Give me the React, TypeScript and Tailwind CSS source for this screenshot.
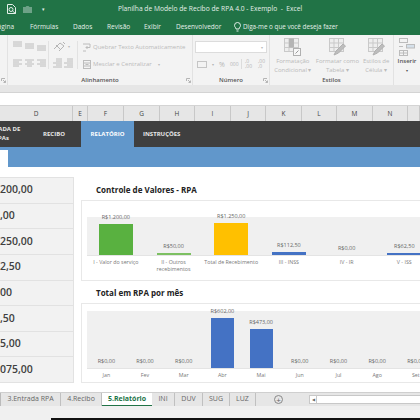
import React from 'react';

const font = "font-['Open_Sans','Noto_Sans',sans-serif]";

const columns = [
  { name: 'D', width: 'w-[73px]' },
  { name: 'E', width: 'w-[15px]' },
  { name: 'F', width: 'w-[36px]' },
  { name: 'G', width: 'w-[36px]' },
  { name: 'H', width: 'w-[35px]' },
  { name: 'I', width: 'w-[36px]' },
  { name: 'J', width: 'w-[35px]' },
  { name: 'K', width: 'w-[36px]' },
  { name: 'L', width: 'w-[35px]' },
  { name: 'M', width: 'w-[36px]' },
  { name: 'N', width: 'w-[35px]' },
  { name: '', width: 'w-[12px]' },
];

const values = ['200,00', ',00', '250,00', '2,50', '00', ',50', '5,00', '075,00'];

const controle = [
  { label: 'I - Valor do serviço', value: 'R$1.200,00', height: 'h-[31px]', color: 'bg-[#59b140]' },
  { label: 'II - Outros recebimentos', value: 'R$50,00', height: 'h-[2px]', color: 'bg-[#7cc062]' },
  { label: 'Total de Recebimento', value: 'R$1.250,00', height: 'h-[32px]', color: 'bg-[#ffc000]' },
  { label: 'III - INSS', value: 'R$112,50', height: 'h-[3px]', color: 'bg-[#4472c4]' },
  { label: 'IV - IR', value: 'R$0,00', height: 'h-0', color: 'bg-[#4472c4]' },
  { label: 'V - ISS', value: 'R$62,50', height: 'h-[2px]', color: 'bg-[#4472c4]' },
];

const meses = [
  { label: 'Jan', value: 'R$0,00', height: 'h-0' },
  { label: 'Fev', value: 'R$0,00', height: 'h-0' },
  { label: 'Mar', value: 'R$0,00', height: 'h-0' },
  { label: 'Abr', value: 'R$602,00', height: 'h-[50px]' },
  { label: 'Mai', value: 'R$473,00', height: 'h-[39px]' },
  { label: 'Jun', value: 'R$0,00', height: 'h-0' },
  { label: 'Jul', value: 'R$0,00', height: 'h-0' },
  { label: 'Ago', value: 'R$0,00', height: 'h-0' },
  { label: 'Set', value: 'R$0,00', height: 'h-0' },
];

const sheets = [
  { name: '3.Entrada RPA', width: 'w-[60px]' },
  { name: '4.Recibo', width: 'w-[41px]' },
  { name: '5.Relatório', width: 'w-[50px]', active: true },
  { name: 'INI', width: 'w-[23px]' },
  { name: 'DUV', width: 'w-[28px]' },
  { name: 'SUG', width: 'w-[27px]' },
  { name: 'LUZ', width: 'w-[26px]' },
];

function Lines({ d, y = 0 }: { d: string; y?: number }) {
  return (
    <svg width="9" height="10" viewBox="0 0 9 10" stroke="#bcbcbc" fill="none" className="shrink-0">
      <path d={d} transform={`translate(0 ${y})`} />
    </svg>
  );
}

function Launcher() {
  return (
    <svg width="5" height="5" viewBox="0 0 5 5" fill="none" stroke="#b5b5b5" className="absolute right-[1px] bottom-[2px]">
      <path d="M.5 3V.5H4M4.500 4.500L2 2M4.500 2.500v2h-2" />
    </svg>
  );
}

function StyleIcon({ kind }: { kind: 'cond' | 'table' | 'cell' }) {
  return (
    <svg width="19" height="18" viewBox="0 0 19 18" fill="none" stroke="#c9c9c9" className="shrink-0">
      <rect x="1.500" y=".5" width="14" height="13" fill="#eeeeee" />
      <path d="M1.500 5h14M1.500 9.500h14M6 .5v13M10.500 .5v13" />
      {kind === 'cond' ? (
        <>
          <path d="M6 .5h5v9H6z" fill="#b5b5b5" stroke="none" />
          <rect x="10.500" y="10.500" width="7" height="7" fill="#f7f7f7" stroke="#b0b0b0" />
          <path d="M12.500 15.500l3-3" stroke="#9a9a9a" />
        </>
      ) : (
        <path d="M6 17l2-4 7-7 2.500 2-7 7z" fill="#bdbdbd" stroke="#b0b0b0" />
      )}
    </svg>
  );
}

function GroupLabel({ children, launcher = false }: { children: string; launcher?: boolean }) {
  return (
    <div className="h-[12px] shrink-0 pt-[3px] text-center text-[6px] leading-[9px] font-semibold text-[#555] relative">
      {children}
      {launcher && <Launcher />}
    </div>
  );
}

function Ribbon() {
  return (
    <div className="flex h-[50px] shrink-0 bg-[#f3f3f3] text-[#bababa] text-[6px] leading-[9px] whitespace-nowrap">
      <div className="w-[8px] shrink-0 border-r border-[#e2e2e2] relative">
        <Launcher />
      </div>

      {/* Alinhamento */}
      <div className="w-[185px] shrink-0 flex flex-col border-r border-[#e2e2e2]">
        <div className="h-[38px] flex pl-[5px] pt-[6px]">
          <div className="w-[36px] h-[28px] border-r border-[#e2e2e2] flex flex-col justify-between pb-[1px]">
            <div className="flex gap-[3px]">
              <Lines d="M0 1h9M0 3h9M0 5h9" />
              <Lines d="M0 3h9M0 5h9M0 7h9" />
              <Lines d="M0 5h9M0 7h9M0 9h9" />
            </div>
            <div className="flex gap-[3px]">
              <Lines d="M0 2h9M0 4h6M0 6h9M0 8h6" />
              <Lines d="M0 2h9M2 4h5M0 6h9M2 8h5" />
              <Lines d="M0 2h9M3 4h6M0 6h9M3 8h6" />
            </div>
          </div>
          <div className="w-[29px] h-[28px] border-r border-[#e2e2e2] pl-[4px] flex flex-col justify-between pb-[1px]">
            <div className="flex items-center gap-[2px]">
              <svg width="13" height="11" viewBox="0 0 13 11" fill="none" stroke="#b5b5b5">
                <path d="M1 8l6-6 4 3-5 5M3 4l4 4M10 1l2 2" />
              </svg>
              <span className="text-[4px] leading-none">▾</span>
            </div>
            <div className="flex gap-[2px]">
              <Lines d="M3 1h6M3 3h6M0 5h9M3 7h6M0 9h9" />
              <Lines d="M3 1h6M3 3h6M0 5h9M3 7h6M0 9h9" />
            </div>
          </div>
          <div className="flex flex-col pl-[5px] gap-[5px]">
            <div className="flex items-center gap-[2px] h-[12px]">
              <svg width="8" height="11" viewBox="0 0 8 11" fill="none" stroke="#bcbcbc" className="shrink-0">
                <path d="M0 2h7v3.500H3M3 5.500L4.500 4M3 5.500L4.500 7M0 9h3" />
              </svg>
              Quebrar Texto Automaticamente
            </div>
            <div className="flex items-center gap-[2px] h-[12px]">
              <svg width="8" height="9" viewBox="0 0 8 9" fill="none" stroke="#bcbcbc" className="shrink-0">
                <rect x=".5" y=".5" width="7" height="8" />
                <path d="M.5 3h7M.5 6h7M2.500 4.500h3" />
              </svg>
              Mesclar e Centralizar
              <span className="ml-[4px] text-[4px]">▾</span>
            </div>
          </div>
        </div>
        <GroupLabel launcher>Alinhamento</GroupLabel>
      </div>

      {/* Número */}
      <div className="w-[77px] shrink-0 flex flex-col border-r border-[#e2e2e2]">
        <div className="h-[38px] pl-[2px] pt-[6px]">
          <div className="h-[12px] w-[72px] bg-white border border-[#dcdcdc] flex items-center justify-end pr-[3px] text-[4px]">▾</div>
          <div className="flex items-center h-[12px] mt-[5px] pl-[2px] text-[#b5b5b5]">
            <span className="w-[10px] h-[7px] border border-[#c5c5c5] shrink-0" />
            <span className="w-[12px] text-[4px] text-center">▾</span>
            <span className="w-[11px] text-[7px]">%</span>
            <span className="w-[11px] text-[5px]">000</span>
            <span className="w-[17px] pl-[3px] text-[5px] leading-[5px] border-l border-[#dcdcdc]">,0<br />,00</span>
            <span className="text-[5px] leading-[5px]">,00<br />,0</span>
          </div>
        </div>
        <GroupLabel launcher>Número</GroupLabel>
      </div>

      {/* Estilos */}
      <div className="w-[124px] shrink-0 flex flex-col border-r border-[#e2e2e2]">
        <div className="h-[38px] flex text-center">
          <div className="w-[46px] flex flex-col items-center pt-[3px]">
            <StyleIcon kind="cond" />
            <span className="mt-[1px]">Formatação</span>
            <span>Condicional ▾</span>
          </div>
          <div className="w-[44px] flex flex-col items-center pt-[3px]">
            <StyleIcon kind="table" />
            <span className="mt-[1px]">Formatar como</span>
            <span>Tabela ▾</span>
          </div>
          <div className="w-[34px] flex flex-col items-center pt-[3px]">
            <StyleIcon kind="cell" />
            <span className="mt-[1px]">Estilos de</span>
            <span>Célula ▾</span>
          </div>
        </div>
        <GroupLabel>Estilos</GroupLabel>
      </div>

      {/* Inserir */}
      <div className="flex-1 flex flex-col items-center pt-[3px]">
        <svg width="16" height="18" viewBox="0 0 16 18" fill="none" stroke="#bcbcbc" className="shrink-0">
          <rect x=".5" y=".5" width="8" height="4" />
          <rect x=".5" y="12.500" width="8" height="5" />
          <path d="M4.500 12.500v5M.5 15h8M0 8.500h4" />
          <rect x="7.500" y="6.500" width="8" height="3.500" fill="#d5e0ea" />
        </svg>
        <span className="mt-[1px] font-semibold text-[#555]">Inserir</span>
        <span className="text-[4px] text-[#555]">▾</span>
      </div>
    </div>
  );
}

function BarChart({
  items,
  cell,
  bar,
  plot,
  labels,
}: {
  items: { label: string; value: string; height: string; color?: string }[];
  cell: string;
  bar: string;
  plot: string;
  labels: string;
}) {
  return (
    <div className="w-[360px]">
      <div className={`flex items-end bg-[#f0f0f0] border-b border-[#e4e4e4] ${plot}`}>
        {items.map((item) => (
          <div key={item.label} className={`${cell} shrink-0 flex flex-col items-center justify-end`}>
            <span className="text-[5.5px] leading-[9px] text-[#666] whitespace-nowrap mb-[2px]">{item.value}</span>
            <div className={`${bar} ${item.height} ${item.color ?? 'bg-[#4472c4]'}`} />
          </div>
        ))}
      </div>
      <div className={`flex ${labels}`}>
        {items.map((item) => (
          <div key={item.label} className={`${cell} shrink-0 text-center text-[5.3px] leading-[7px] text-[#777] pt-[3px]`}>
            {item.label}
          </div>
        ))}
      </div>
    </div>
  );
}

export default function App() {
  return (
    <div className={`w-[420px] h-[420px] overflow-hidden flex flex-col bg-white ${font}`}>
      {/* Title bar */}
      <div className="h-[35px] shrink-0 bg-[#217346] text-[#e4efe9] flex flex-col">
        <div className="h-[18px] relative flex items-center justify-center text-[6.7px] whitespace-pre">
          <div className="absolute left-[7px] top-[4px] flex items-center gap-[7px]">
            <svg width="9" height="10" viewBox="0 0 9 10" fill="none" stroke="#e4efe9">
              <path d="M.5.5h5l3 3v6h-8z" />
              <circle cx="4" cy="5.500" r="2" />
              <path d="M5.500 7l3 2.500" />
            </svg>
            <svg width="9" height="7" viewBox="0 0 9 7" fill="#6da287">
              <path d="M0 1h2.500L3.500 0h2l1 1H9v6H0z" />
            </svg>
            <span className="text-[5px] ml-[3px] leading-none">▾</span>
          </div>
          {'Planilha de Modelo de Recibo de RPA 4.0 - Exemplo  -  Excel'}
        </div>
        <div className="flex-1 flex items-start pt-[4px] text-[6.5px] leading-[10px] whitespace-nowrap">
          <span className="w-[30px] text-right -ml-[16px] mr-[16px]">Página</span>
          <span className="w-[43px]">Fórmulas</span>
          <span className="w-[34px]">Dados</span>
          <span className="w-[37px]">Revisão</span>
          <span className="w-[32px]">Exibir</span>
          <span className="w-[58px]">Desenvolvedor</span>
          <span className="flex items-center gap-[2px] text-[6.3px]">
            <svg width="7" height="10" viewBox="0 0 7 10" fill="none" stroke="#e4efe9">
              <path d="M2 7C2 5.500.5 5 .5 3.500a3 3 0 016 0C6.500 5 5 5.500 5 7zM2.500 9h2" />
            </svg>
            Diga-me o que você deseja fazer
          </span>
        </div>
      </div>

      <Ribbon />

      {/* Formula bar */}
      <div className="h-[7px] shrink-0 bg-[#e6e6e6]" />
      <div className="h-[13px] shrink-0 bg-white border-t border-[#d4d4d4]" />

      {/* Column headers */}
      <div className="h-[16px] shrink-0 flex bg-[#e6e6e6] border-t border-[#d4d4d4] text-[6.5px] text-[#444]">
        {columns.map((c) => (
          <div key={c.width + c.name} className={`${c.width} shrink-0 flex items-center justify-center border-r border-[#c8c8c8]`}>
            {c.name}
          </div>
        ))}
      </div>

      {/* Nav */}
      <div className="h-[26px] shrink-0 flex bg-[#3f3f3f] text-[6px] font-bold text-[#e8e8e8] whitespace-nowrap">
        <div className="-ml-[19px] w-[41px] shrink-0 flex items-center justify-center text-center leading-[9px]">
          ENTRADA DE<br />RPAs
        </div>
        <div className="w-[59px] shrink-0 pl-[5px] flex items-center justify-center">RECIBO</div>
        <div className="w-[53px] shrink-0 bg-[#6197cb] text-white flex items-center justify-center">RELATÓRIO</div>
        <div className="pl-[9px] flex items-center">INSTRUÇÕES</div>
      </div>

      {/* Blue band */}
      <div className="h-[20px] shrink-0 flex">
        <div className="w-[8px] shrink-0 flex flex-col">
          <div className="h-[3px] bg-[#6197cb]" />
        </div>
        <div className="flex-1 bg-[#6197cb]" />
      </div>

      {/* Content */}
      <div className="h-[225px] shrink-0 flex items-start">
        <div className="w-[74px] shrink-0 h-[206px] mt-[10px] bg-[#f2f2f2] border border-l-0 border-[#e2e2e2] flex flex-col">
          {values.map((v) => (
            <div key={v} className="flex-1 flex items-center border-b last:border-b-0 border-[#e2e2e2] text-[10.5px] font-semibold text-[#404040] whitespace-nowrap">
              {v}
            </div>
          ))}
        </div>

        <div className="w-[346px] shrink-0 pl-[7px]">
          <div className="h-[33px] pl-[15px] pt-[18px] text-[8px] leading-[10px] font-bold text-[#222]">
            Controle de Valores - RPA
          </div>
          <div className="h-[81px] border-t border-b border-l border-[#e8e8e8] pt-[16px] pl-[5px]">
            <BarChart items={controle} cell="w-[57.7px]" bar="w-[34px]" plot="h-[39px]" labels="h-[24px]" />
          </div>
          <div className="h-[22px] pl-[15px] pt-[7px] text-[8px] leading-[10px] font-bold text-[#222]">
            Total em RPA por mês
          </div>
          <div className="h-[80px] border-t border-b border-l border-[#e8e8e8] pt-[7px] pl-[5px]">
            <BarChart items={meses} cell="w-[38.7px]" bar="w-[23px]" plot="h-[58px]" labels="h-[12px]" />
          </div>
        </div>
      </div>

      {/* Sheet tabs */}
      <div className="h-[14px] shrink-0 flex items-stretch bg-[#e6e6e6] border-t border-[#cfcfcf] text-[7px] text-[#666] whitespace-nowrap">
        <div className="w-[1px] shrink-0 bg-[#bbb]" />
        {sheets.map((s) =>
          s.active ? (
            <div key={s.name} className={`${s.width} shrink-0 bg-white text-[#217346] font-bold flex items-center justify-center border-b border-[#217346]`}>
              {s.name}
            </div>
          ) : (
            <div key={s.name} className={`${s.width} shrink-0 flex items-center justify-center border-r border-[#c0c0c0]`}>
              {s.name}
            </div>
          )
        )}
        <div className="ml-[18px] w-[9px] shrink-0 flex items-center">
          <span className="w-[9px] h-[9px] rounded-full border border-[#888] flex items-center justify-center text-[8px] leading-none">+</span>
        </div>
        <div className="ml-[26px] flex items-center shrink-0">
          <span className="w-[8px] h-[9px] bg-white border border-[#c8c8c8] text-[4px] flex items-center justify-center">◀</span>
          <span className="w-[110px] h-[9px] bg-white border-y border-[#c8c8c8]" />
        </div>
      </div>

      {/* Status bar */}
      <div className="flex-1 bg-[#f0f0f0] flex flex-col justify-end">
        <div className="h-[2px] ml-[51px] bg-[#111]" />
      </div>
    </div>
  );
}
